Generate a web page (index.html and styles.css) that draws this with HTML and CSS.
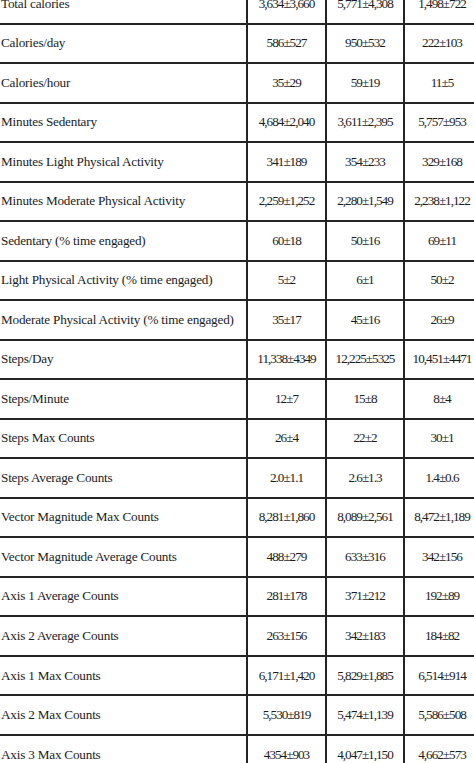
FILE: index.html
```html
<!DOCTYPE html>
<html>
<head>
<meta charset="utf-8">
<link rel="stylesheet" href="styles.css">
</head>
<body>
<div class="table">
  <div class="cell label">Total calories</div><div class="cell num">3,634±3,660</div><div class="cell num">5,771±4,308</div><div class="cell num">1,498±722</div>
  <div class="cell label">Calories/day</div><div class="cell num">586±527</div><div class="cell num">950±532</div><div class="cell num">222±103</div>
  <div class="cell label">Calories/hour</div><div class="cell num">35±29</div><div class="cell num">59±19</div><div class="cell num">11±5</div>
  <div class="cell label">Minutes Sedentary</div><div class="cell num">4,684±2,040</div><div class="cell num">3,611±2,395</div><div class="cell num">5,757±953</div>
  <div class="cell label">Minutes Light Physical Activity</div><div class="cell num">341±189</div><div class="cell num">354±233</div><div class="cell num">329±168</div>
  <div class="cell label">Minutes Moderate Physical Activity</div><div class="cell num">2,259±1,252</div><div class="cell num">2,280±1,549</div><div class="cell num">2,238±1,122</div>
  <div class="cell label">Sedentary (% time engaged)</div><div class="cell num">60±18</div><div class="cell num">50±16</div><div class="cell num">69±11</div>
  <div class="cell label">Light Physical Activity (% time engaged)</div><div class="cell num">5±2</div><div class="cell num">6±1</div><div class="cell num">50±2</div>
  <div class="cell label">Moderate Physical Activity (% time engaged)</div><div class="cell num">35±17</div><div class="cell num">45±16</div><div class="cell num">26±9</div>
  <div class="cell label">Steps/Day</div><div class="cell num">11,338±4349</div><div class="cell num">12,225±5325</div><div class="cell num">10,451±4471</div>
  <div class="cell label">Steps/Minute</div><div class="cell num">12±7</div><div class="cell num">15±8</div><div class="cell num">8±4</div>
  <div class="cell label">Steps Max Counts</div><div class="cell num">26±4</div><div class="cell num">22±2</div><div class="cell num">30±1</div>
  <div class="cell label">Steps Average Counts</div><div class="cell num">2.0±1.1</div><div class="cell num">2.6±1.3</div><div class="cell num">1.4±0.6</div>
  <div class="cell label">Vector Magnitude Max Counts</div><div class="cell num">8,281±1,860</div><div class="cell num">8,089±2,561</div><div class="cell num">8,472±1,189</div>
  <div class="cell label">Vector Magnitude Average Counts</div><div class="cell num">488±279</div><div class="cell num">633±316</div><div class="cell num">342±156</div>
  <div class="cell label">Axis 1 Average Counts</div><div class="cell num">281±178</div><div class="cell num">371±212</div><div class="cell num">192±89</div>
  <div class="cell label">Axis 2 Average Counts</div><div class="cell num">263±156</div><div class="cell num">342±183</div><div class="cell num">184±82</div>
  <div class="cell label">Axis 1 Max Counts</div><div class="cell num">6,171±1,420</div><div class="cell num">5,829±1,885</div><div class="cell num">6,514±914</div>
  <div class="cell label">Axis 2 Max Counts</div><div class="cell num">5,530±819</div><div class="cell num">5,474±1,139</div><div class="cell num">5,586±508</div>
  <div class="cell label">Axis 3 Max Counts</div><div class="cell num">4354±903</div><div class="cell num">4,047±1,150</div><div class="cell num">4,662±573</div>
</div>
</body>
</html>
```

FILE: styles.css
```css
html, body {
  margin: 0;
  padding: 0;
  background: #ffffff;
  overflow: hidden;
}

body {
  width: 474px;
  height: 763px;
  font-family: "Liberation Serif", "Times New Roman", serif;
  font-size: 13.2px;
  color: #1c1c1c;
}

.table {
  display: grid;
  grid-template-columns: 246px 79px 78px 76px;
  grid-auto-rows: 39.53px;
  margin-top: -17px;
  width: 479px;
}

.cell {
  box-sizing: border-box;
  display: flex;
  align-items: center;
  border-top: 2px solid #242424;
  white-space: nowrap;
  overflow: hidden;
}

.table > .cell:nth-child(-n+4) {
  border-top: none;
  padding-top: 2px;
}

.label {
  justify-content: flex-start;
  padding-left: 1px;
  letter-spacing: -0.2px;
}

.num {
  justify-content: center;
  border-left: 2px solid #242424;
  letter-spacing: -1px;
}
```
